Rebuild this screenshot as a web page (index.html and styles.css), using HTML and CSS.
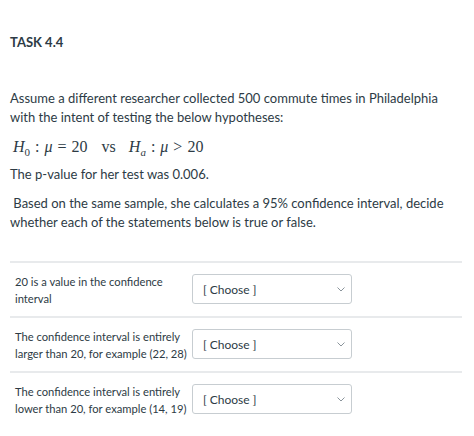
FILE: index.html
```html
<!DOCTYPE html>
<html>
<head>
<meta charset="utf-8">
<link rel="stylesheet" href="styles.css">
</head>
<body>
<div class="page">
  <h2 class="title">TASK 4.4</h2>
  <p class="para">Assume a different researcher collected 500 commute times in Philadelphia with the intent of testing the below hypotheses:</p>
  <p class="math"><i>H</i><sub>0</sub><span class="rel">:</span><i>μ</i><span class="rel">=</span>20<span class="vs">vs</span><i>H</i><sub><i>a</i></sub><span class="rel">:</span><i>μ</i><span class="rel">&gt;</span>20</p>
  <p class="para">The p-value for her test was 0.006.</p>
  <p class="para">&nbsp;Based on the same sample, she calculates a 95% confidence interval, decide whether each of the statements below is true or false.</p>
  <div class="rows">
    <div class="row">
      <div class="label">20 is a value in the confidence interval</div>
      <div class="select"><span>[ Choose ]</span><svg class="chev" width="8" height="5" viewBox="0 0 8 5"><path d="M0.5 0.5 L4 4 L7.5 0.5" fill="none" stroke="#8a949b" stroke-width="1"/></svg></div>
    </div>
    <div class="row">
      <div class="label">The confidence interval is entirely larger than 20, for example (22, 28)</div>
      <div class="select"><span>[ Choose ]</span><svg class="chev" width="8" height="5" viewBox="0 0 8 5"><path d="M0.5 0.5 L4 4 L7.5 0.5" fill="none" stroke="#8a949b" stroke-width="1"/></svg></div>
    </div>
    <div class="row">
      <div class="label">The confidence interval is entirely lower than 20, for example (14, 19)</div>
      <div class="select"><span>[ Choose ]</span><svg class="chev" width="8" height="5" viewBox="0 0 8 5"><path d="M0.5 0.5 L4 4 L7.5 0.5" fill="none" stroke="#8a949b" stroke-width="1"/></svg></div>
    </div>
  </div>
</div>
</body>
</html>
```
FILE: styles.css
```css
html, body {
  margin: 0;
  padding: 0;
  background: #ffffff;
}
body {
  font-family: Lato, "Open Sans", sans-serif;
  color: #2d3b45;
}
.page {
  padding: 33px 12px 0 10px;
}
.title {
  font-size: 13px;
  font-weight: 700;
  line-height: 18px;
  margin: 0 0 38px 0;
}
.para {
  font-size: 13px;
  line-height: 19px;
  margin: 0 0 10px 0;
}
.math {
  font-family: "Liberation Serif", "DejaVu Serif", serif;
  font-size: 16px;
  line-height: 19px;
  margin: 0 0 9px 3px;
}
.math i {
  font-style: italic;
}
.math sub {
  font-size: 11px;
  vertical-align: -4px;
  line-height: 0;
}
.math .rel {
  margin: 0 5px;
}
.math .vs {
  margin: 0 13px 0 14px;
}
.rows {
  margin-top: 29px;
  border-top: 2px solid #e8eaec;
}
.row {
  display: flex;
  align-items: center;
  padding: 10px 0 9px 5px;
  border-bottom: 2px solid #e8eaec;
}
.row:last-child {
  border-bottom: none;
}
.label {
  width: 177px;
  flex: none;
  font-size: 11.2px;
  line-height: 17px;
}
.select {
  box-sizing: border-box;
  width: 160px;
  height: 30px;
  margin-top: -2px;
  border: 1px solid #c7cdd1;
  border-radius: 3px;
  display: flex;
  align-items: center;
  justify-content: space-between;
  padding: 0 6px 0 10px;
  font-size: 12px;
  background: #fff;
}
.chev {
  display: block;
}
```
